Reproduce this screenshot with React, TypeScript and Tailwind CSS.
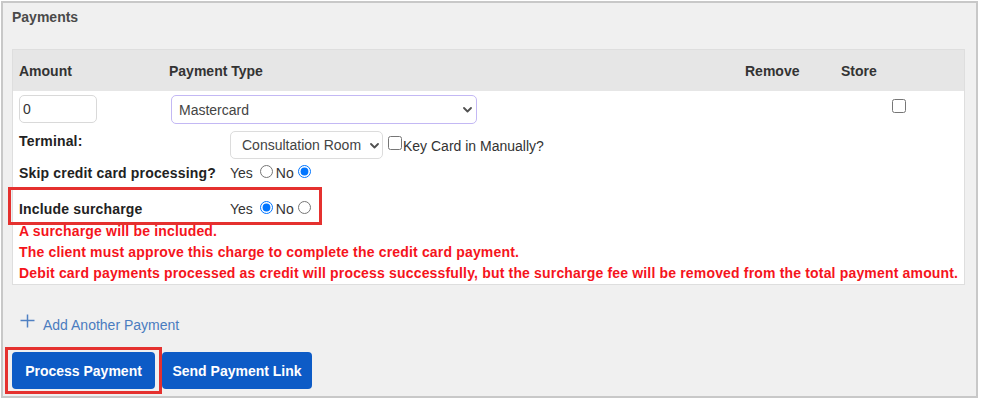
import React from 'react';

// small chevron drawn over the native select (appearance-none)
const Chevron = ({ className }: { className: string }) => (
    <svg width="9" height="6" viewBox="0 0 9 6" className={`pointer-events-none absolute ${className}`}>
        <path d="M1 1l3.5 3.5L8 1" stroke="#505050" strokeWidth="1.8" fill="none" strokeLinecap="round" strokeLinejoin="round" />
    </svg>
);

const Radio = ({ checked, name }: { checked: boolean; name: string }) => (
    <input type="radio" name={name} defaultChecked={checked} className="w-[13px] h-[13px] m-0 mb-[3px]" />
);

const YesNo = ({ name, yes }: { name: string; yes: boolean }) => (
    <div className="flex items-center text-[#333]">
        <span>Yes</span>
        <span className="ml-[7px] flex"><Radio name={name} checked={yes} /></span>
        <span className="ml-[3px]">No</span>
        <span className="ml-[4px] flex"><Radio name={name} checked={!yes} /></span>
    </div>
);

export default function App() {
    const notes = [
        'A surcharge will be included.',
        'The client must approve this charge to complete the credit card payment.',
        'Debit card payments processed as credit will process successfully, but the surcharge fee will be removed from the total payment amount.',
    ];

    return (
        <div className="w-[981px] h-[401px] bg-white pl-[1px] pt-[1px] font-['Liberation_Sans',Arial,sans-serif] text-[14px] leading-[20px]">
            <div className="relative w-[977px] h-[397px] border-2 border-[#c8c8c8] bg-[#f0f0f0] overflow-hidden">
                <div className="pl-[9px] pt-[4px] font-bold text-[#4a4a4a]">Payments</div>

                {/* payments table */}
                <div className="ml-[9px] mt-[22px] w-[953px] border border-[#dedede] bg-white">
                    <div className="grid grid-cols-[156px_576px_96px_1fr] h-[41px] items-center bg-[#e6e6e6] font-bold text-[#333]">
                        <span className="pl-[6px]">Amount</span>
                        <span>Payment Type</span>
                        <span>Remove</span>
                        <span>Store</span>
                    </div>

                    <div className="grid grid-cols-[156px_576px_96px_1fr] items-start pt-[4px]">
                        <div className="pl-[6px]">
                            <input
                                defaultValue="0"
                                className="w-[78px] h-[28px] border border-[#d9d9d9] rounded-[5px] pl-[3px] text-[#333] outline-none"
                            />
                        </div>
                        <div className="pl-[2px]">
                            <div className="relative w-[306px]">
                                <select className="appearance-none w-[306px] h-[29px] border-[1.5px] border-[#c3b8f4] rounded-[5px] pl-[7px] text-[#444] bg-white outline-none">
                                    <option>Mastercard</option>
                                </select>
                                <Chevron className="right-[5px] top-[12px]" />
                            </div>
                        </div>
                        <div />
                        <div className="pl-[51px] pt-[4px] flex">
                            <input type="checkbox" className="w-[14px] h-[14px] m-0" />
                        </div>
                    </div>

                    <div className="flex items-start mt-[7px]">
                        <span className="w-[217px] pl-[6px] font-bold text-[#222] tracking-[0.17px]">Terminal:</span>
                        <div className="relative w-[153px]">
                            <select className="appearance-none w-[153px] h-[28px] border border-[#dcdcdc] rounded-[5px] pl-[11px] text-[#444] bg-white outline-none">
                                <option>Consultation Room</option>
                            </select>
                            <Chevron className="right-[4px] top-[12px]" />
                        </div>
                        <label className="flex items-start mt-[5px] ml-[5px] text-[#333]">
                            <input type="checkbox" className="w-[14px] h-[14px] m-0" />
                            <span className="ml-[1px]">Key Card in Manually?</span>
                        </label>
                    </div>

                    <div className="flex items-center mt-[4px]">
                        <span className="w-[217px] pl-[6px] font-bold text-[#222] tracking-[0.17px]">Skip credit card processing?</span>
                        <YesNo name="skip" yes={false} />
                    </div>

                    <div className="flex items-center mt-[16px]">
                        <span className="w-[217px] pl-[6px] font-bold text-[#222] tracking-[0.17px]">Include surcharge</span>
                        <YesNo name="surcharge" yes={true} />
                    </div>

                    <div className="mt-[2px] pl-[6px] font-bold text-[#f5141c] leading-[21px] tracking-[0.17px]">
                        {notes.map(n => <div key={n}>{n}</div>)}
                    </div>
                </div>

                <div className="flex items-start ml-[17px] mt-[29px] text-[#4a7cbf]">
                    <svg width="15" height="14" viewBox="0 0 15 14">
                        <path d="M7.5 0.5v13M0.5 6.5h14" stroke="#4f80c2" strokeWidth="1.5" fill="none" />
                    </svg>
                    <span className="ml-[8px] mt-[1px]">Add Another Payment</span>
                </div>

                <div className="flex ml-[9px] mt-[17px] gap-[7px]">
                    <button className="w-[143px] h-[37px] rounded-[4px] bg-[#0d5bc6] text-white font-bold">Process Payment</button>
                    <button className="w-[150px] h-[37px] rounded-[4px] bg-[#0d5bc6] text-white font-bold">Send Payment Link</button>
                </div>

                {/* red annotation boxes */}
                <div className="absolute left-[5px] top-[184px] w-[314px] h-[38px] border-[3px] border-[#e5312f] pointer-events-none" />
                <div className="absolute left-[2px] top-[344px] w-[157px] h-[47px] border-[3px] border-[#e5312f] pointer-events-none" />
            </div>
        </div>
    );
}
